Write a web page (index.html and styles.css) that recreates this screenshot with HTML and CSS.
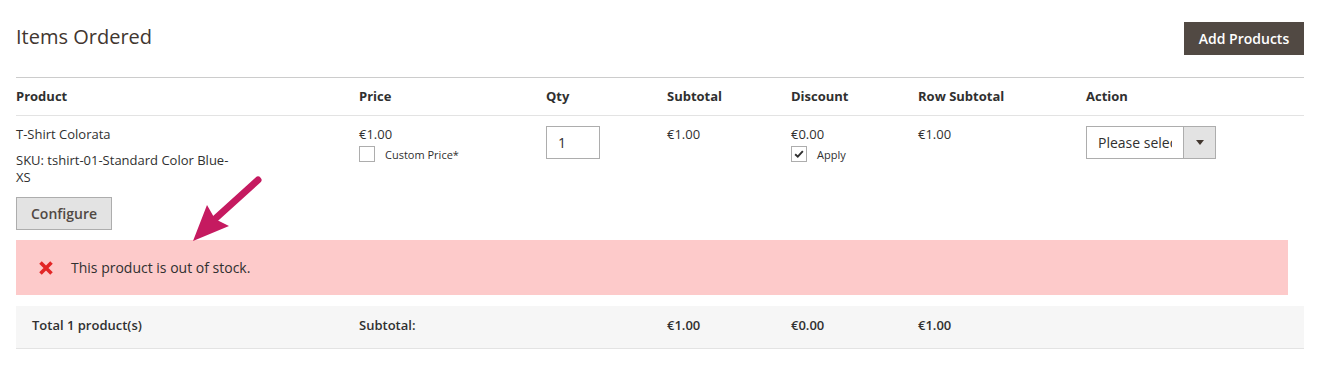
FILE: index.html
```html
<!DOCTYPE html>
<html lang="en">
<head>
<meta charset="utf-8">
<title>Items Ordered</title>
<link rel="stylesheet" href="styles.css">
</head>
<body>
<div class="page">
  <div class="section-head">
    <h2 class="title">Items Ordered</h2>
    <button class="btn-primary" type="button">Add Products</button>
  </div>

  <div class="items">
    <div class="grid head-row">
      <div class="cell">Product</div>
      <div class="cell">Price</div>
      <div class="cell">Qty</div>
      <div class="cell">Subtotal</div>
      <div class="cell">Discount</div>
      <div class="cell">Row Subtotal</div>
      <div class="cell">Action</div>
    </div>

    <div class="grid item-row">
      <div class="cell product">
        <div class="name">T-Shirt Colorata</div>
        <div class="sku">SKU: tshirt-01-Standard Color Blue-XS</div>
        <button class="btn-secondary" type="button">Configure</button>
      </div>
      <div class="cell">
        <div class="value">€1.00</div>
        <label class="check"><span class="box"></span><span>Custom Price*</span></label>
      </div>
      <div class="cell">
        <div class="qty">1</div>
      </div>
      <div class="cell"><div class="value">€1.00</div></div>
      <div class="cell">
        <div class="value">€0.00</div>
        <label class="check"><span class="box checked"><svg viewBox="0 0 16 16" width="16" height="16"><path d="M3.6 8.2 L6.6 11 L12.4 4.8" fill="none" stroke="#303030" stroke-width="2.2"/></svg></span><span>Apply</span></label>
      </div>
      <div class="cell"><div class="value">€1.00</div></div>
      <div class="cell">
        <div class="select">
          <span class="select-text"><span class="select-clip">Please select</span></span>
          <span class="select-btn"><span class="tri"></span></span>
        </div>
      </div>
    </div>

    <div class="error">
      <svg class="error-icon" viewBox="0 0 16 16" width="16" height="16"><path d="M2.5 2.5 L13.5 13.5 M13.5 2.5 L2.5 13.5" stroke="#e22626" stroke-width="3.6" stroke-linecap="butt"/></svg>
      <span>This product is out of stock.</span>
    </div>

    <div class="grid total-row">
      <div class="cell first">Total 1 product(s)</div>
      <div class="cell">Subtotal:</div>
      <div class="cell"></div>
      <div class="cell">€1.00</div>
      <div class="cell">€0.00</div>
      <div class="cell">€1.00</div>
      <div class="cell"></div>
    </div>

    <svg class="annot-arrow" viewBox="0 0 90 80" width="90" height="80">
      <line x1="73" y1="10" x2="31" y2="48" stroke="#c51a60" stroke-width="7" stroke-linecap="round"/>
      <polygon points="8,71 22,35 30,49 44,56" fill="#c51a60"/>
    </svg>
  </div>
</div>
</body>
</html>
```

FILE: styles.css
```css
* { box-sizing: border-box; }
html, body { margin: 0; padding: 0; background: #fff; }
body {
  font-family: "Open Sans", "Liberation Sans", sans-serif;
  color: #303030;
  font-size: 13px;
}
.page {
  padding: 0 24px 0 16px;
}
.section-head {
  display: flex;
  justify-content: space-between;
  align-items: flex-start;
  padding-top: 22px;
  height: 77px;
}
.title {
  margin: 0;
  font-size: 20px;
  font-weight: 400;
  color: #41362f;
  line-height: 28px;
  margin-top: 1px;
}
.btn-primary {
  background: #514943;
  color: #fff;
  border: 0;
  font-family: inherit;
  font-size: 14px;
  font-weight: 600;
  height: 33px;
  width: 120px;
  padding: 0;
  cursor: pointer;
}
.items {
  position: relative;
  border-top: 1px solid #cccccc;
}
.grid {
  display: grid;
  grid-template-columns: 343px 187px 121px 124px 127px 168px 218px;
}
.head-row {
  height: 38px;
  align-items: center;
  border-bottom: 1px solid #e3e3e3;
  font-weight: 700;
  padding-bottom: 2px;
}
.item-row {
  padding-top: 8px;
  align-items: start;
}
.value {
  line-height: 20px;
}
.name {
  line-height: 20px;
}
.sku {
  width: 215px;
  line-height: 17px;
  margin-top: 8px;
}
.btn-secondary {
  margin-top: 11px;
  width: 96px;
  height: 33px;
  padding: 0;
  background: #e3e3e3;
  border: 1px solid #adadad;
  color: #514943;
  font-family: inherit;
  font-size: 14px;
  font-weight: 600;
}
.check {
  display: flex;
  align-items: center;
  margin-top: 2px;
  font-size: 11px;
  height: 16px;
}
.box {
  width: 16px;
  height: 16px;
  border: 1px solid #adadad;
  margin-right: 10px;
  background: #fff;
  display: inline-flex;
  align-items: center;
  justify-content: center;
}
.box svg { display: block; }
.qty {
  margin-top: 2px;
  width: 54px;
  height: 33px;
  border: 1px solid #adadad;
  padding-left: 11px;
  line-height: 31px;
  font-size: 14px;
}
.select {
  margin-top: 2px;
  width: 130px;
  height: 33px;
  border: 1px solid #adadad;
  display: flex;
}
.select-text {
  width: 96px;
  padding-left: 11px;
  line-height: 31px;
  font-size: 14px;
  color: #303030;
}
.select-clip {
  display: block;
  width: 74px;
  overflow: hidden;
  white-space: nowrap;
}
.select-btn {
  flex: 1;
  background: #e3e3e3;
  border-left: 1px solid #adadad;
  display: flex;
  align-items: center;
  justify-content: center;
}
.tri {
  width: 0;
  height: 0;
  border-left: 4px solid transparent;
  border-right: 4px solid transparent;
  border-top: 5px solid #41362f;
}
.error {
  margin-top: 10px;
  width: 1272px;
  height: 55px;
  background: #fdcaca;
  display: flex;
  align-items: center;
  padding-left: 22px;
  font-size: 14px;
}
.error-icon {
  margin-right: 17px;
}
.total-row {
  margin-top: 11px;
  height: 43px;
  align-items: center;
  background: #f6f6f6;
  border-bottom: 1px solid #e3e3e3;
  font-weight: 600;
  padding-bottom: 5px;
}
.total-row .first {
  padding-left: 16px;
}
.annot-arrow {
  position: absolute;
  left: 169px;
  top: 92px;
}
```
